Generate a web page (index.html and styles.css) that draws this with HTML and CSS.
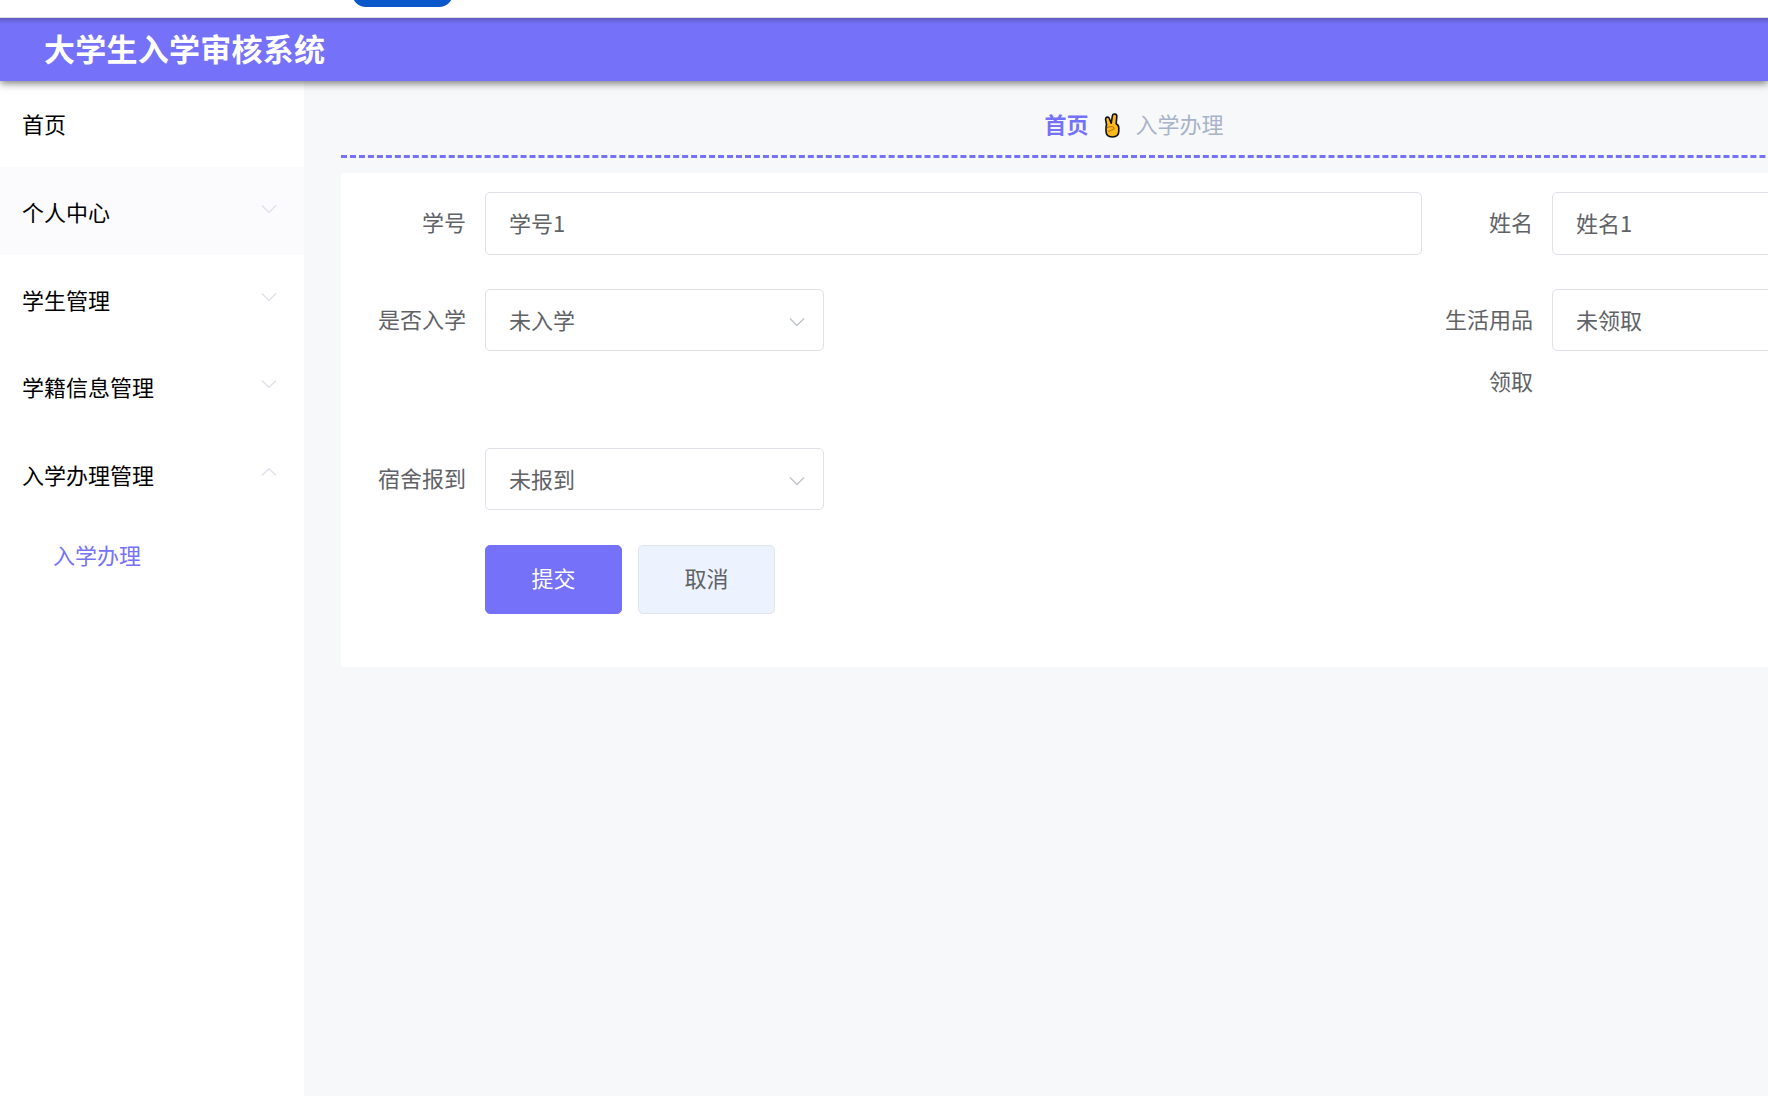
FILE: index.html
```html
<!DOCTYPE html>
<html lang="zh-CN">
  <head>
    <meta charset="UTF-8" />
    <title>大学生入学审核系统</title>
    <link rel="stylesheet" href="styles.css">
  </head>
  <body>
    <div class="topbar"><div class="pill"></div></div>
    <header class="header">大学生入学审核系统</header>

    <div class="layout">
      <aside class="sidebar">
        <div class="menu-item">首页</div>
        <div class="menu-item hovered">个人中心
          <svg class="chev" viewBox="0 0 16 10"><path d="M1 1.5 8 8.5 15 1.5" /></svg>
        </div>
        <div class="menu-item">学生管理
          <svg class="chev" viewBox="0 0 16 10"><path d="M1 1.5 8 8.5 15 1.5" /></svg>
        </div>
        <div class="menu-item">学籍信息管理
          <svg class="chev" viewBox="0 0 16 10"><path d="M1 1.5 8 8.5 15 1.5" /></svg>
        </div>
        <div class="menu-item">入学办理管理
          <svg class="chev" viewBox="0 0 16 10"><path d="M1 8.5 8 1.5 15 8.5" /></svg>
        </div>
        <div class="sub-item">入学办理</div>
      </aside>

      <main class="content">
        <div class="content-inner">
          <div class="crumbs">
            <span class="crumb-home">首页</span>
            <svg class="crumb-sep" viewBox="0 0 16 25">
              <path class="hand" d="M2.6 12 1.6 6.6C1.2 3.8 4.6 3.2 5.4 5.6L7.2 10.2 8.4 2.8C8.8.2 13 .6 12.8 3.4L12.2 10.8C13.8 11.6 14.8 13 14.8 15V18C14.8 22 12 24 8.4 24 4.8 24 2 22 2 18V14C2 13.2 2.2 12.6 2.6 12Z" />
              <path class="fold" d="M3 14.6C5.5 13.4 8.6 13.4 9.8 14.4 10.8 15.4 9.6 17 7.8 16.8 6.6 18 5 18.4 3.8 18.2" />
            </svg>
            <span class="crumb-page">入学办理</span>
          </div>

          <form class="card">
            <div class="row">
              <div class="field wide">
                <label>学号</label>
                <div class="input">学号1</div>
              </div>
              <div class="field">
                <label>姓名</label>
                <div class="input">姓名1</div>
              </div>
            </div>

            <div class="row">
              <div class="field wide">
                <label>是否入学</label>
                <div class="input select">未入学
                  <svg class="caret" viewBox="0 0 16 10"><path d="M1 1.5 8 8.5 15 1.5" /></svg>
                </div>
              </div>
              <div class="field">
                <label>生活用品领取</label>
                <div class="input select full">未领取
                  <svg class="caret" viewBox="0 0 16 10"><path d="M1 1.5 8 8.5 15 1.5" /></svg>
                </div>
              </div>
            </div>

            <div class="row">
              <div class="field wide">
                <label>宿舍报到</label>
                <div class="input select">未报到
                  <svg class="caret" viewBox="0 0 16 10"><path d="M1 1.5 8 8.5 15 1.5" /></svg>
                </div>
              </div>
            </div>

            <div class="actions">
              <button type="button" class="btn btn-primary">提交</button>
              <button type="button" class="btn btn-cancel">取消</button>
            </div>
          </form>
        </div>
      </main>
    </div>
  </body>
</html>
```

FILE: styles.css
```css
* {
  box-sizing: border-box;
  font-family: "Noto Sans CJK SC", "Liberation Sans", sans-serif;
}

html,
body {
  margin: 0;
  height: 100%;
  overflow: hidden;
  background-color: #fff;
}

.topbar {
  position: relative;
  z-index: 3;
  height: 18px;
  padding-left: 352px;
  overflow: hidden;
  background-color: #fff;
  border-bottom: 1px solid #ddd;
}

.pill {
  width: 101px;
  height: 30px;
  margin-top: -23px;
  background-color: #0a58ca;
  border-radius: 14px;
}

.header {
  position: relative;
  z-index: 2;
  height: 63px;
  padding-left: 44px;
  line-height: 60px;
  font-size: 31px;
  letter-spacing: 0.25px;
  font-weight: 700;
  color: #fff;
  background: linear-gradient(#5f5cc4, #7571f9 6px);
  box-shadow: 0 2px 8px rgba(0, 0, 0, 0.55);
}

.layout {
  display: flex;
  height: 1015px;
}

.sidebar {
  flex: 0 0 304px;
  background-color: #fff;
}

.menu-item {
  display: flex;
  align-items: center;
  justify-content: space-between;
  height: 87.8px;
  padding: 0 27px 0 22px;
  font-size: 22px;
  color: #000;
}

.menu-item:first-child {
  height: 86px;
  padding-bottom: 3px;
}

.hovered {
  background-color: #fbfbfe;
}

.chev {
  width: 16px;
  height: 10px;
  margin-top: -4px;
  fill: none;
  stroke: #dedee8;
  stroke-width: 1.2;
}

.sub-item {
  height: 88px;
  padding-left: 53px;
  line-height: 73px;
  font-size: 22px;
  color: #7571f9;
}

.content {
  flex: 1;
  min-width: 0;
  overflow: hidden;
  background-color: #f7f8fa;
}

.content-inner {
  width: 1623px;
  padding-left: 37px;
}

.crumbs {
  display: flex;
  align-items: center;
  justify-content: center;
  height: 77px;
  padding-top: 9px;
  border-bottom: 3px dashed #7571f9;
  font-size: 22px;
}

.crumb-home {
  font-weight: 700;
  color: #7571f9;
}

.crumb-page {
  color: #a7b3c8;
}

.crumb-sep {
  width: 16px;
  height: 25px;
  margin: 6px 16px 0 15px;
}

.hand {
  fill: #fcb91c;
  stroke: #111;
  stroke-width: 1.6;
  stroke-linejoin: round;
}

.fold {
  fill: none;
  stroke: #a86a10;
  stroke-width: 1;
}

.card {
  margin-top: 15px;
  padding: 19px 0 53px 24px;
  background-color: #fff;
}

.row {
  display: flex;
  gap: 10px;
  margin-bottom: 34.5px;
}

.field {
  display: flex;
  flex: 0 0 373px;
}

.wide {
  flex: 0 0 1057px;
}

label {
  flex: 0 0 120px;
  margin: -2px 0 2px;
  padding-right: 19px;
  line-height: 62px;
  font-size: 22px;
  text-align: right;
  color: #606266;
}

.input {
  position: relative;
  flex: 1;
  height: 62.5px;
  padding-left: 23px;
  line-height: 58px;
  font-size: 22px;
  color: #606266;
  background-color: #fff;
  border: 1.5px solid #dfe1e8;
  border-radius: 5px;
}

.select {
  flex: 0 0 339px;
  height: 62px;
}

.select.full {
  flex: 1;
}

.caret {
  position: absolute;
  top: 27px;
  right: 18px;
  width: 16px;
  height: 10px;
  fill: none;
  stroke: #c0c4cc;
  stroke-width: 1.4;
}

.actions {
  display: flex;
  gap: 16px;
  padding-left: 120px;
  margin-top: 35.5px;
}

.row + .actions {
  margin-top: 35.5px;
}

.row:last-of-type {
  margin-bottom: 0;
}

.btn {
  width: 137px;
  height: 69px;
  padding: 0 0 5px;
  font-size: 22px;
  border-radius: 5px;
}

.btn-primary {
  color: #fff;
  background-color: #7571f9;
  border: 1px solid #7571f9;
}

.btn-cancel {
  color: #606266;
  background-color: #ecf3fe;
  border: 1.5px solid #dfe5ef;
}
```
